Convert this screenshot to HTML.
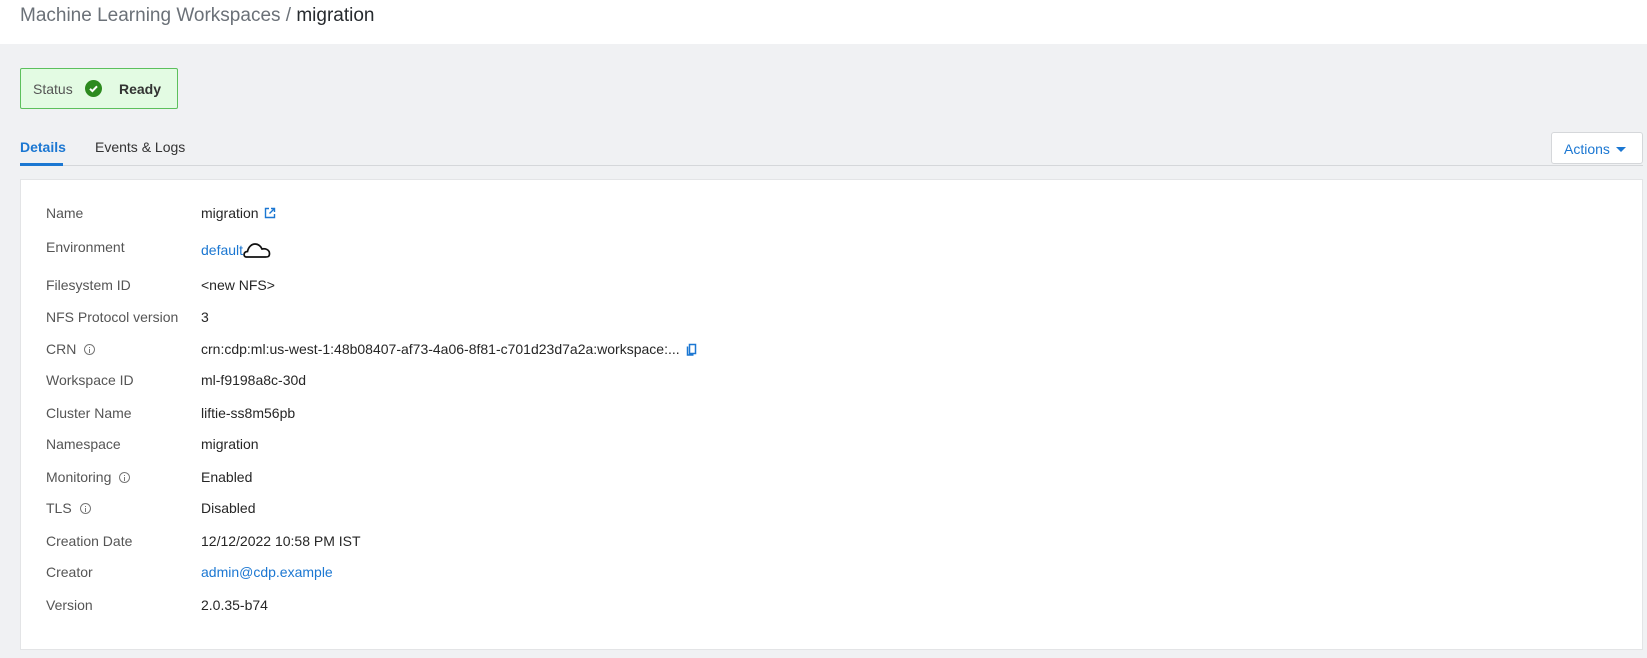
<!DOCTYPE html>
<html><head><meta charset="utf-8"><style>
*{box-sizing:border-box;margin:0;padding:0}
body{width:1647px;height:658px;background:#f0f1f3;font-family:"Liberation Sans",sans-serif;color:#262626;overflow:hidden;position:relative}
.hdr{position:absolute;left:0;top:0;width:1647px;height:44px;background:#fff;}
.hdr .t{position:absolute;left:20px;top:5px;font-size:19px;color:#6b7178;}
.hdr .t b{font-weight:normal;color:#262a2e}
.status{position:absolute;left:20px;top:68px;width:158px;height:41px;background:#e3fbe3;border:1px solid #5cc05c;border-radius:2px;font-size:14px}
.status .l{position:absolute;left:12px;top:12px;color:#555}
.status .ic{position:absolute;left:64px;top:11px;width:17px;height:17px;border-radius:50%;background:#2d8a1f}
.status .r{position:absolute;left:98px;top:12px;font-weight:bold;color:#333}
.tabs{position:absolute;left:20px;top:139px;font-size:14px}
.tab1{position:absolute;left:0;color:#1b77d2;font-weight:bold;white-space:nowrap}
.tab2{position:absolute;left:75px;color:#333;white-space:nowrap}
.ul{position:absolute;left:20px;top:163px;width:43px;height:3px;background:#1b77d2}
.line{position:absolute;left:20px;top:165px;width:1623px;height:1px;background:#d5d7da}
.act{position:absolute;left:1551px;top:132px;width:92px;height:32px;background:#fff;border:1px solid #d5d7da;border-radius:3px;color:#1b77d2;font-size:14px;padding:8px 0 0 12px}
.act i{display:inline-block;border-left:5px solid transparent;border-right:5px solid transparent;border-top:5px solid #1b77d2;margin-left:6px;vertical-align:2px}
.panel{position:absolute;left:20px;top:179px;width:1623px;height:471px;background:#fff;border:1px solid #e3e4e6}
.row{position:absolute;left:25px;font-size:14px;height:18px;line-height:18px;white-space:nowrap}
.row .k{position:absolute;left:0;color:#555}
.row .v{position:absolute;left:155px;color:#262626}
.row .a{color:#1b77d2}
.info{display:inline-block;width:11px;height:11px;border:1px solid #777;border-radius:50%;margin-left:8px;vertical-align:-1px;position:relative}
.info:after{content:"";position:absolute;left:4px;top:4px;width:1px;height:4px;background:#777}
.info:before{content:"";position:absolute;left:4px;top:2px;width:1px;height:1px;background:#777}
</style></head><body>
<div class="hdr"><div class="t">Machine Learning Workspaces / <b>migration</b></div></div>
<div class="status"><span class="l">Status</span><span class="ic"><svg width="17" height="17"><path d="M5 8.8l2.4 2.3 4.6-4.8" fill="none" stroke="#fff" stroke-width="2"/></svg></span><span class="r">Ready</span></div>
<div class="tabs"><span class="tab1">Details</span><span class="tab2">Events &amp; Logs</span></div>
<div class="line"></div><div class="ul"></div>
<div class="act">Actions<i></i></div>
<div class="panel">
<div class="row" style="top:24px"><span class="k">Name</span><span class="v">migration <svg width="12" height="12" style="vertical-align:-1px;margin-left:2px"><path d="M5 1.5H1.5v9h9V7M7 1.5h3.5V5M10.5 1.5L5.5 6.5" fill="none" stroke="#1b77d2" stroke-width="1.4"/></svg></span></div>
<div class="row" style="top:58px"><span class="k">Environment</span><span class="v"><span class="a">default</span><svg width="30" height="22" style="vertical-align:-5px"><path d="M3 19c-3-0.5-2.5-5.5 1.5-5.5 1-5 4.5-7.5 7.5-7.5 3.5 0 6 2.5 7 5 3.5-1 7.5 1 7.5 4.5s-2 3.5-4 3.5z" fill="none" stroke="#111" stroke-width="1.7"/></svg></span></div>
<div class="row" style="top:96px"><span class="k">Filesystem ID</span><span class="v">&lt;new NFS&gt;</span></div>
<div class="row" style="top:128px"><span class="k">NFS Protocol version</span><span class="v">3</span></div>
<div class="row" style="top:160px"><span class="k">CRN<span class="info"></span></span><span class="v">crn:cdp:ml:us-west-1:48b08407-af73-4a06-8f81-c701d23d7a2a:workspace:... <svg width="12" height="14" style="vertical-align:-2px;margin-left:2px"><path d="M3.5 2.5h6v9h-6zM1.5 4.5v8.5h6" fill="none" stroke="#1b77d2" stroke-width="1.5"/></svg></span></div>
<div class="row" style="top:191px"><span class="k">Workspace ID</span><span class="v">ml-f9198a8c-30d</span></div>
<div class="row" style="top:224px"><span class="k">Cluster Name</span><span class="v">liftie-ss8m56pb</span></div>
<div class="row" style="top:255px"><span class="k">Namespace</span><span class="v">migration</span></div>
<div class="row" style="top:288px"><span class="k">Monitoring<span class="info"></span></span><span class="v">Enabled</span></div>
<div class="row" style="top:319px"><span class="k">TLS<span class="info"></span></span><span class="v">Disabled</span></div>
<div class="row" style="top:352px"><span class="k">Creation Date</span><span class="v">12/12/2022 10:58 PM IST</span></div>
<div class="row" style="top:383px"><span class="k">Creator</span><span class="v a">admin@cdp.example</span></div>
<div class="row" style="top:416px"><span class="k">Version</span><span class="v">2.0.35-b74</span></div>
</div>
</body></html>
